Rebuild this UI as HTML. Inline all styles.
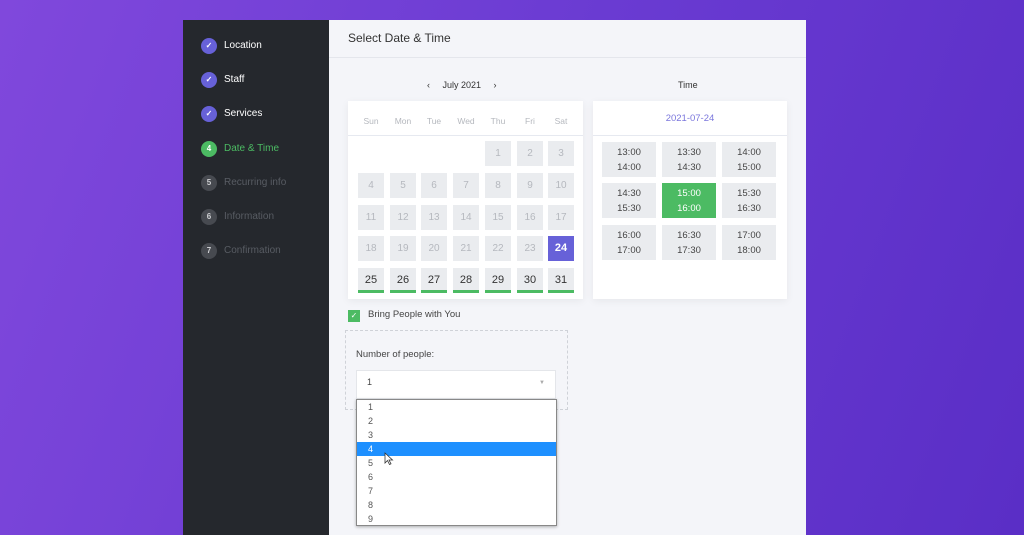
<!DOCTYPE html>
<html><head><style>
*{margin:0;padding:0;box-sizing:border-box}
body{width:1024px;height:535px;overflow:hidden;font-family:"Liberation Sans",sans-serif;background:linear-gradient(110deg,#8048dc 0%,#6a3bd2 50%,#5a2ec6 100%);position:relative}
.abs{position:absolute}
.panel{left:183px;top:20px;width:623px;height:515px;background:#f4f5f9}
.side{left:183px;top:20px;width:146px;height:515px;background:#25282d}
.st{position:absolute;left:201px;width:120px;height:16px;font-size:10px;line-height:16px;padding-left:23px}
.st i{position:absolute;left:0;top:0;width:16px;height:16px;border-radius:50%;font-style:normal;font-size:8px;text-align:center;line-height:16px;font-weight:bold}
.done{color:#fff}.done i{background:#6761d8;color:#fff}
.cur{color:#4cbb63}.cur i{background:#4cbb63;color:#fff}
.fut{color:#585c63}.fut i{background:#474a50;color:#cfd0d3}
.card{background:#fff;box-shadow:0 2px 8px rgba(0,0,0,.06)}
.wd{position:absolute;top:116px;width:26px;text-align:center;font-size:8.5px;color:#b5b8be}
.c{position:absolute;width:26px;height:25px;background:#eaecef;text-align:center;line-height:25px;font-size:10px;color:#b5b8be}
.c.a{color:#333;font-size:11px;border-bottom:3px solid #4cbb63;line-height:24px}
.c.s{background:#6761d8;color:#fff;font-weight:bold;font-size:11px}
.t{position:absolute;width:54px;height:35px;background:#eaecef;text-align:center;font-size:9.5px;color:#444;line-height:15px;padding-top:3px}
.t.g{background:#4cbb63;color:#fff}
.dd div{height:14px;font-size:9px;line-height:14px;padding-left:11px;color:#555}
</style></head><body>
<div class="abs panel"></div>
<div class="abs side"></div>
<div class="st done" style="top:38px"><i>✓</i>Location</div>
<div class="st done" style="top:72px"><i>✓</i>Staff</div>
<div class="st done" style="top:106px"><i>✓</i>Services</div>
<div class="st cur" style="top:141px"><i>4</i>Date &amp; Time</div>
<div class="st fut" style="top:175px"><i>5</i>Recurring info</div>
<div class="st fut" style="top:209px"><i>6</i>Information</div>
<div class="st fut" style="top:243px"><i>7</i>Confirmation</div>
<div class="abs" style="left:329px;top:57px;width:477px;height:1px;background:#e4e6ec"></div>
<div class="abs" style="left:348px;top:31px;font-size:12px;color:#333">Select Date &amp; Time</div>
<div class="abs" style="left:427px;top:80px;font-size:9px;color:#333">‹&nbsp;&nbsp;&nbsp;&nbsp;&nbsp;July 2021&nbsp;&nbsp;&nbsp;&nbsp;&nbsp;›</div>
<div class="abs" style="left:678px;top:80px;font-size:9px;color:#333">Time</div>
<div class="abs card" style="left:348px;top:101px;width:235px;height:198px"></div>
<div class="abs" style="left:348px;top:135px;width:235px;height:1px;background:#e6e9f0"></div>
<div class="abs card" style="left:593px;top:101px;width:194px;height:198px"></div>
<div class="abs" style="left:593px;top:135px;width:194px;height:1px;background:#e6e9f0"></div>
<div class="abs" style="left:593px;top:113px;width:194px;text-align:center;font-size:9.5px;color:#7a76dc">2021-07-24</div>
<div id="cal"></div>
<div class="t" style="left:602px;top:142px">13:00<br>14:00</div>
<div class="t" style="left:662px;top:142px">13:30<br>14:30</div>
<div class="t" style="left:722px;top:142px">14:00<br>15:00</div>
<div class="t" style="left:602px;top:183px">14:30<br>15:30</div>
<div class="t g" style="left:662px;top:183px">15:00<br>16:00</div>
<div class="t" style="left:722px;top:183px">15:30<br>16:30</div>
<div class="t" style="left:602px;top:225px">16:00<br>17:00</div>
<div class="t" style="left:662px;top:225px">16:30<br>17:30</div>
<div class="t" style="left:722px;top:225px">17:00<br>18:00</div>
<div class="abs" style="left:348px;top:310px;width:12px;height:12px;background:#4cbb63;color:#fff;font-size:8px;text-align:center;line-height:12px">✓</div>
<div class="abs" style="left:368px;top:309px;font-size:9.5px;color:#444">Bring People with You</div>
<div class="abs" style="left:345px;top:330px;width:223px;height:80px;border:1px dashed #cfd2d8"></div>
<div class="abs" style="left:356px;top:349px;font-size:9.5px;color:#444">Number of people:</div>
<div class="abs" style="left:356px;top:370px;width:200px;height:29px;background:#fff;border:1px solid #e4e6ea;font-size:9px;color:#444;padding:6px 10px">1<span style="position:absolute;right:10px;top:9px;font-size:6px;color:#aaa">▼</span></div>
<div class="abs dd" style="left:356px;top:399px;width:201px;height:127px;background:#fff;border:1px solid #888;box-shadow:0 1px 3px rgba(0,0,0,.3)">
<div>1</div><div>2</div><div>3</div><div style="background:#1e90ff;color:#fff">4</div><div>5</div><div>6</div><div>7</div><div>8</div><div>9</div></div>
<svg class="abs" style="left:384px;top:452px" width="10" height="14"><path d="M1 1 L1 11 L3.5 8.5 L5.5 12.5 L7 11.8 L5 8 L8.5 8 Z" fill="#fff" stroke="#333" stroke-width="0.8"/></svg>
<script>
var xs=[358,390,421,453,485,517,548],ys=[141,173,205,236,268],h='';
['Sun','Mon','Tue','Wed','Thu','Fri','Sat'].forEach(function(d,i){h+='<div class="wd" style="left:'+xs[i]+'px">'+d+'</div>'});
for(var n=1;n<=31;n++){var p=n+3,r=Math.floor(p/7),c=p%7,cl='c'+(n==24?' s':n>24?' a':'');
h+='<div class="'+cl+'" style="left:'+xs[c]+'px;top:'+ys[r]+'px">'+n+'</div>';}
document.getElementById('cal').innerHTML=h;
</script>
</body></html>
